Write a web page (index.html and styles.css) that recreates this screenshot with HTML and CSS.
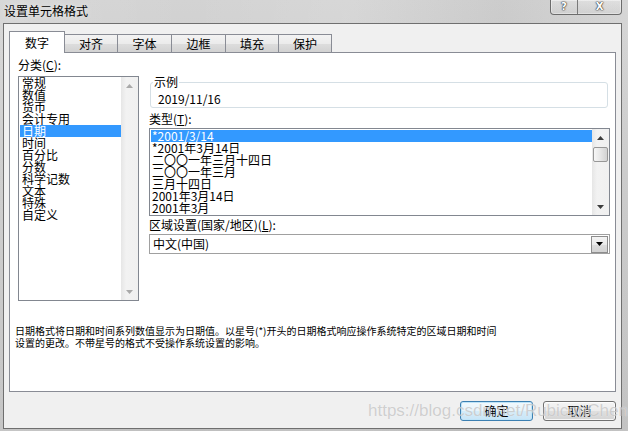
FILE: index.html
```html
<!DOCTYPE html>
<html>

<head>
    <meta charset="utf-8">
    <!-- 设置单元格格式 dialog -->
    <title>设置单元格格式</title>
    <link rel="stylesheet" href="styles.css">
</head>

<body>
    <div class="window">
        <div class="title-bar">
            <span class="title">设置单元格格式</span>
            <div class="caption">
                <span class="cap-btn cap-help">?</span>
                <span class="cap-btn cap-close">X</span>
            </div>
        </div>

        <div class="client">
            <div class="tabs">
                <div class="tab active">数字</div>
                <div class="tab">对齐</div>
                <div class="tab tab-wide">字体</div>
                <div class="tab tab-wide">边框</div>
                <div class="tab">填充</div>
                <div class="tab">保护</div>
            </div>

            <div class="panel">
                <div class="main">
                    <div class="left-col">
                        <div class="label">分类(<u>C</u>):</div>
                        <div class="listbox category">
                            <ul class="items">
                                <li>常规</li>
                                <li>数值</li>
                                <li>货币</li>
                                <li>会计专用</li>
                                <li class="selected">日期</li>
                                <li>时间</li>
                                <li>百分比</li>
                                <li>分数</li>
                                <li>科学记数</li>
                                <li>文本</li>
                                <li>特殊</li>
                                <li>自定义</li>
                            </ul>
                            <div class="scrollbar">
                                <div class="sb-btn">
                                    <svg width="7" height="4" viewBox="0 0 7 4"><polygon points="3.5,0 7,4 0,4" fill="#a9a9a9"/></svg>
                                </div>
                                <div class="sb-track"></div>
                                <div class="sb-btn">
                                    <svg width="7" height="4" viewBox="0 0 7 4"><polygon points="0,0 7,0 3.5,4" fill="#a9a9a9"/></svg>
                                </div>
                            </div>
                        </div>
                    </div>

                    <div class="right-col">
                        <fieldset class="sample">
                            <legend>示例</legend>
                            <div class="sample-value">2019/11/16</div>
                        </fieldset>

                        <div class="label type-label">类型(<u>T</u>):</div>
                        <div class="listbox types">
                            <ul class="items">
                                <li class="selected">*2001/3/14</li>
                                <li>*2001年3月14日</li>
                                <li>二〇〇一年三月十四日</li>
                                <li>二〇〇一年三月</li>
                                <li>三月十四日</li>
                                <li>2001年3月14日</li>
                                <li>2001年3月</li>
                            </ul>
                            <div class="scrollbar">
                                <div class="sb-btn">
                                    <svg width="7" height="4" viewBox="0 0 7 4"><polygon points="3.5,0 7,4 0,4" fill="#3c3c3c"/></svg>
                                </div>
                                <div class="sb-track">
                                    <div class="sb-thumb"></div>
                                </div>
                                <div class="sb-btn">
                                    <svg width="7" height="4" viewBox="0 0 7 4"><polygon points="0,0 7,0 3.5,4" fill="#3c3c3c"/></svg>
                                </div>
                            </div>
                        </div>

                        <div class="label region-label">区域设置(国家/地区)(<u>L</u>):</div>
                        <div class="combo">
                            <span class="combo-text">中文(中国)</span>
                            <span class="combo-btn">
                                <svg width="7" height="4" viewBox="0 0 7 4"><polygon points="0,0 7,0 3.5,4" fill="#000"/></svg>
                            </span>
                        </div>
                    </div>
                </div>

                <p class="description">日期格式将日期和时间系列数值显示为日期值。以星号(*)开头的日期格式响应操作系统特定的区域日期和时间<br>设置的更改。不带星号的格式不受操作系统设置的影响。</p>
            </div>

            <div class="button-row">
                <button class="button default">确定</button>
                <button class="button">取消</button>
            </div>
        </div>

        <div class="watermark">https://blog.csdn.net/RubiconChen</div>
    </div>
</body>

</html>
```

FILE: styles.css
```css
* {
    margin: 0;
    padding: 0;
    box-sizing: border-box;
}

body {
    width: 628px;
    height: 431px;
    overflow: hidden;
    font-family: "Noto Sans CJK SC", sans-serif;
    font-size: 12px;
    line-height: 12px;
    color: #000;
}

.window {
    position: relative;
    width: 628px;
    height: 431px;
    display: flex;
    flex-direction: column;
    padding: 0 6px 2px 3px;
    background:
        linear-gradient(90deg, rgba(255,255,255,0.12) 0%, rgba(255,255,255,0) 30%, rgba(255,255,255,0.1) 55%, rgba(0,0,0,0.03) 80%, rgba(255,255,255,0.08) 100%),
        linear-gradient(180deg, #d3d3d3 0%, #c8c8c8 40%, #bebebe 100%);
}

/* title bar */
.title-bar {
    height: 23px;
    display: flex;
    justify-content: space-between;
    align-items: flex-start;
}

.title {
    padding: 5px 0 0 1px;
    font-size: 12px;
    line-height: 12px;
    text-shadow: 0 0 6px rgba(255,255,255,0.7);
}

.caption {
    display: flex;
    height: 15px;
    border: 1px solid #6c6c6c;
    border-top: none;
    border-radius: 0 0 4px 4px;
    overflow: hidden;
    box-shadow: inset 0 0 0 1px rgba(255,255,255,0.45);
}

.cap-btn {
    display: flex;
    align-items: center;
    justify-content: center;
    font-family: "DejaVu Sans", sans-serif;
    font-weight: bold;
    font-size: 10px;
    color: #fff;
    text-shadow: 0 0 1px #333, 0 0 1px #333, 0 0 2px #555;
    background: linear-gradient(180deg, rgba(255,255,255,0.25), rgba(200,200,200,0.2));
}

.cap-help {
    width: 27px;
    border-right: 1px solid #7a7a7a;
}

.cap-close {
    width: 43px;
}

/* client area */
.client {
    flex: 1;
    display: flex;
    flex-direction: column;
    background-color: #f0f0f0;
    border: 1px solid #6f6f6f;
    padding: 7px 5px 0 5px;
}

.tabs {
    display: flex;
    align-items: flex-end;
    height: 21px;
    position: relative;
    z-index: 1;
}

.tab {
    width: 54px;
    height: 18px;
    margin-right: -1px;
    border: 1px solid #898c95;
    border-bottom: none;
    background: linear-gradient(180deg, #f3f3f3 0%, #ebebeb 50%, #dddddd 51%, #d2d2d2 100%);
    text-align: center;
    line-height: 17px;
}

.tab-wide {
    width: 55px;
}

.tab.active {
    width: 56px;
    height: 22px;
    margin-bottom: -1px;
    background: #fff;
    line-height: 21px;
    position: relative;
    z-index: 2;
}

.panel {
    height: 340px;
    background: #fff;
    border: 1px solid #898c95;
    padding: 6px 5px 0 5px;
}

.main {
    display: flex;
    gap: 10px;
    padding-left: 3px;
}

.label {
    height: 12px;
    line-height: 12px;
    white-space: nowrap;
}

.left-col {
    width: 121px;
}

.left-col .label {
    margin-bottom: 5px;
}

/* list boxes */
.listbox {
    display: flex;
    border: 1px solid #828790;
    background: #fff;
}

.listbox.category {
    height: 225px;
}

.listbox.types {
    height: 88px;
    margin-top: 3px;
}

.items {
    list-style: none;
    flex: 1;
}

.items li {
    height: 12px;
    line-height: 12px;
    margin-left: 1px;
    padding-left: 2px;
    white-space: nowrap;
}

.types .items {
    padding-top: 1px;
}

.types .items li {
    padding-left: 1px;
}

.items li.selected {
    background-color: #3399ff;
    color: #fff;
}

.scrollbar {
    width: 17px;
    display: flex;
    flex-direction: column;
    background: linear-gradient(90deg, #e6e6e6 0%, #f2f2f2 30%, #f0f0f0 100%);
}

.sb-btn {
    height: 17px;
    display: flex;
    align-items: center;
    justify-content: center;
}

.sb-track {
    flex: 1;
    padding: 1px 1px 0 1px;
}

.sb-thumb {
    height: 15px;
    border: 1px solid #979797;
    border-radius: 2px;
    background: linear-gradient(90deg, #f6f6f6 0%, #e6e6e6 50%, #d2d2d2 100%);
}

/* right column */
.right-col {
    width: 461px;
    margin-top: 16px;
}

.sample {
    margin: 0 2px 0 1px;
    min-width: 0;
    border: 1px solid #d5dfe5;
    border-radius: 3px;
    padding: 0 0 0 2px;
}

.sample legend {
    padding: 0 1px;
    line-height: 14px;
}

.sample-value {
    margin: 4px 0 2px 5px;
    line-height: 12px;
}

.type-label {
    margin-top: 5px;
}

.region-label {
    margin-top: 3px;
}

.combo {
    margin-top: 3px;
    height: 20px;
    display: flex;
    align-items: center;
    justify-content: space-between;
    border: 1px solid #a0a0a0;
    background: #fff;
    padding: 0 1px 0 3px;
}

.combo-btn {
    width: 17px;
    height: 17px;
    display: flex;
    align-items: center;
    justify-content: center;
    border: 1px solid #8d8d8d;
    background: linear-gradient(180deg, #f4f4f4 0%, #e9e9e9 50%, #dcdcdc 51%, #d2d2d2 100%);
}

.description {
    margin-top: 24px;
    font-size: 10px;
    line-height: 12px;
    white-space: nowrap;
}

/* bottom buttons */
.button-row {
    display: flex;
    justify-content: flex-end;
    gap: 10px;
    margin-top: 9px;
}

.button {
    width: 73px;
    height: 20px;
    font-family: "Noto Sans CJK SC", sans-serif;
    font-size: 12px;
    line-height: 12px;
    color: #000;
    border: 1px solid #707070;
    border-radius: 3px;
    background: linear-gradient(180deg, #f4f4f4 0%, #ececec 50%, #dfdfdf 51%, #d4d4d4 100%);
    box-shadow: inset 0 0 0 1px rgba(255,255,255,0.8);
}

.button.default {
    border-color: #3c7fb1;
    box-shadow: inset 0 0 0 1px #bfe4f8;
    background: linear-gradient(180deg, #f2f9fd 0%, #e6f3fb 50%, #d4ecf9 51%, #c8e5f7 100%);
}

.watermark {
    position: absolute;
    left: 368px;
    top: 401px;
    font-family: "Liberation Sans", sans-serif;
    font-size: 17px;
    line-height: 20px;
    white-space: nowrap;
    color: rgba(170, 170, 170, 0.55);
    text-shadow: 0 0 1px rgba(255,255,255,0.8);
}
```
